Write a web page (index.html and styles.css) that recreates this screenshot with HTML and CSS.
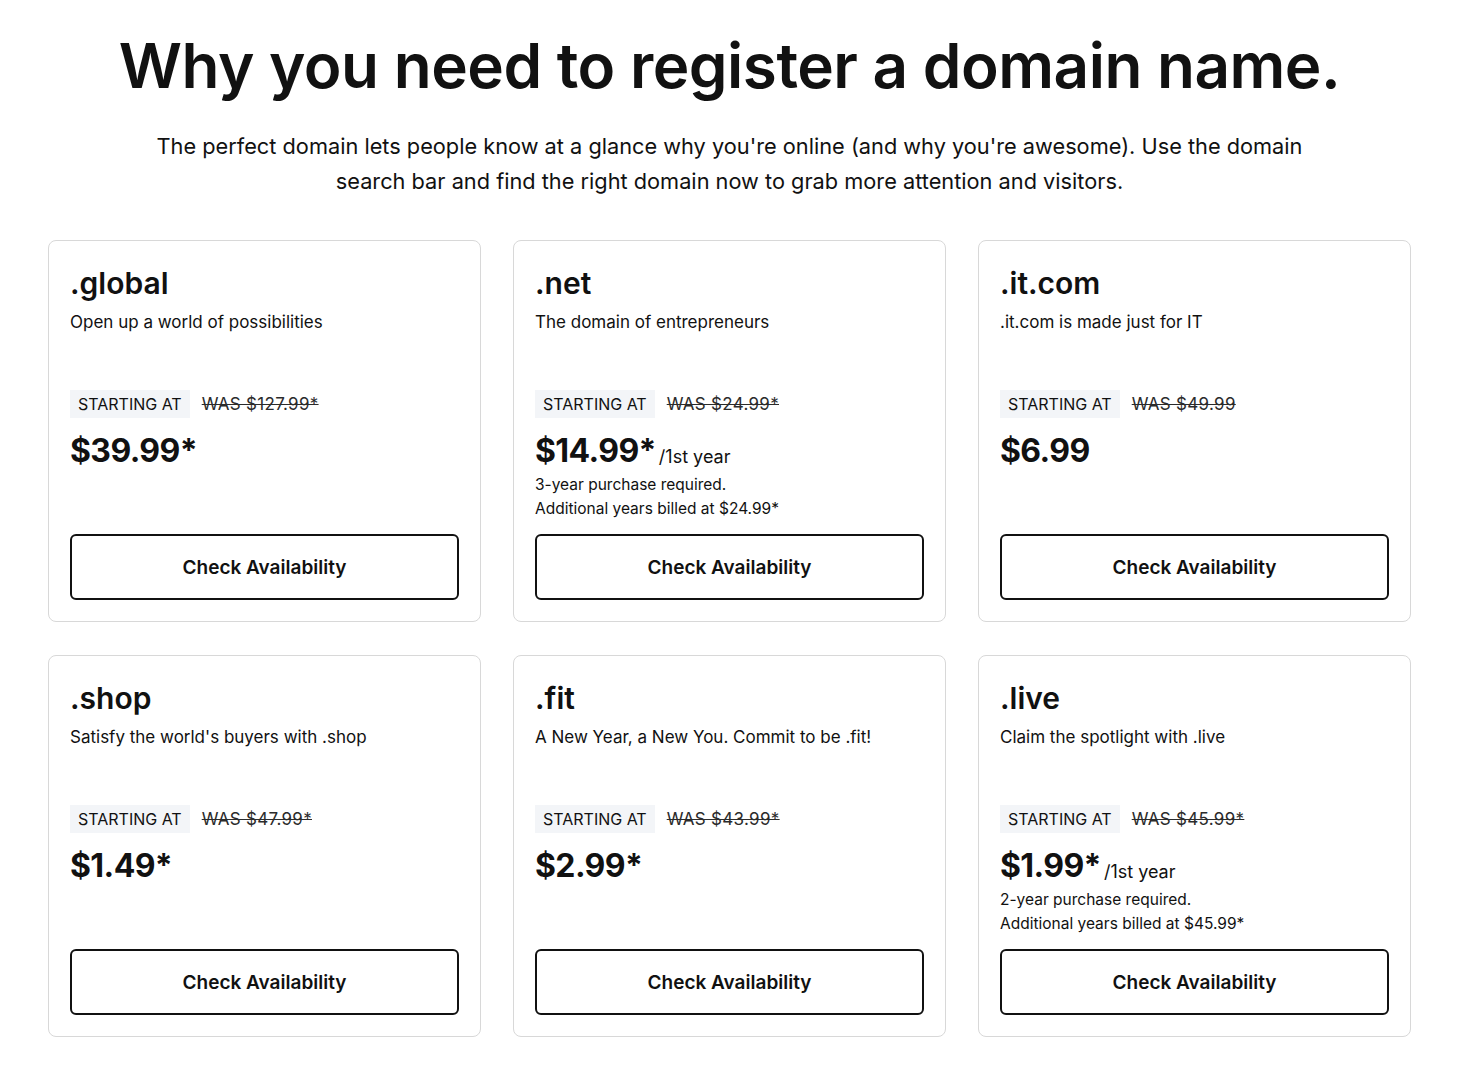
FILE: index.html
```html
<!DOCTYPE html>
<html lang="en">
<head>
<meta charset="utf-8">
<title>Why you need to register a domain name.</title>
<link rel="stylesheet" href="styles.css">
</head>
<body>
<main class="page">
  <header class="intro">
    <h1 class="intro-title">Why you need to register a domain name.</h1>
    <p class="intro-text">The perfect domain lets people know at a glance why you're online (and why you're awesome). Use the domain search bar and find the right domain now to grab more attention and visitors.</p>
  </header>

  <section class="cards">
    <article class="card">
      <h2 class="tld">.global</h2>
      <p class="tagline">Open up a world of possibilities</p>
      <div class="pricing">
        <div class="price-meta"><span class="badge">STARTING AT</span><s class="was">WAS $127.99*</s></div>
        <div class="price-row"><span class="price">$39.99*</span></div>
      </div>
      <button class="cta">Check Availability</button>
    </article>

    <article class="card">
      <h2 class="tld">.net</h2>
      <p class="tagline">The domain of entrepreneurs</p>
      <div class="pricing">
        <div class="price-meta"><span class="badge">STARTING AT</span><s class="was">WAS $24.99*</s></div>
        <div class="price-row"><span class="price">$14.99*</span><span class="term">/1st year</span></div>
        <p class="note">3-year purchase required.</p>
        <p class="note">Additional years billed at $24.99*</p>
      </div>
      <button class="cta">Check Availability</button>
    </article>

    <article class="card">
      <h2 class="tld">.it.com</h2>
      <p class="tagline">.it.com is made just for IT</p>
      <div class="pricing">
        <div class="price-meta"><span class="badge">STARTING AT</span><s class="was">WAS $49.99</s></div>
        <div class="price-row"><span class="price">$6.99</span></div>
      </div>
      <button class="cta">Check Availability</button>
    </article>

    <article class="card">
      <h2 class="tld">.shop</h2>
      <p class="tagline">Satisfy the world's buyers with .shop</p>
      <div class="pricing">
        <div class="price-meta"><span class="badge">STARTING AT</span><s class="was">WAS $47.99*</s></div>
        <div class="price-row"><span class="price">$1.49*</span></div>
      </div>
      <button class="cta">Check Availability</button>
    </article>

    <article class="card">
      <h2 class="tld">.fit</h2>
      <p class="tagline">A New Year, a New You. Commit to be .fit!</p>
      <div class="pricing">
        <div class="price-meta"><span class="badge">STARTING AT</span><s class="was">WAS $43.99*</s></div>
        <div class="price-row"><span class="price">$2.99*</span></div>
      </div>
      <button class="cta">Check Availability</button>
    </article>

    <article class="card">
      <h2 class="tld">.live</h2>
      <p class="tagline">Claim the spotlight with .live</p>
      <div class="pricing">
        <div class="price-meta"><span class="badge">STARTING AT</span><s class="was">WAS $45.99*</s></div>
        <div class="price-row"><span class="price">$1.99*</span><span class="term">/1st year</span></div>
        <p class="note">2-year purchase required.</p>
        <p class="note">Additional years billed at $45.99*</p>
      </div>
      <button class="cta">Check Availability</button>
    </article>
  </section>
</main>
</body>
</html>
```

FILE: styles.css
```css
* { box-sizing: border-box; }

html, body {
  margin: 0;
  padding: 0;
  background: #ffffff;
  color: #111111;
  font-family: Inter, "Liberation Sans", Arial, sans-serif;
}

.page {
  width: 1363px;
  margin: 0 0 0 48px;
  padding: 0 0 40px;
}

.intro {
  text-align: center;
}

.intro-title {
  margin: 0;
  padding-top: 26px;
  font-size: 62px;
  line-height: 80px;
  font-weight: 600;
  letter-spacing: -0.5px;
  color: #111111;
}

.intro-text {
  margin: 23px auto 0;
  max-width: 1180px;
  font-size: 21.75px;
  line-height: 35px;
  color: #111111;
}

.cards {
  margin-top: 41px;
  display: grid;
  grid-template-columns: repeat(3, 1fr);
  column-gap: 32px;
  row-gap: 33px;
}

.card {
  display: flex;
  flex-direction: column;
  border: 1px solid #d8d8d8;
  border-radius: 8px;
  padding: 23px 21px 21px;
  min-height: 382px;
}

.tld {
  margin: 0;
  font-size: 30px;
  line-height: 38px;
  font-weight: 600;
}

.tagline {
  margin: 8px 0 0;
  font-size: 17px;
  line-height: 24px;
}

.pricing {
  margin-top: 56px;
}

.price-meta {
  display: flex;
  align-items: center;
  gap: 12px;
}

.badge {
  display: inline-block;
  background: #f3f5f8;
  padding: 0 8px;
  height: 28px;
  line-height: 28px;
  font-size: 16px;
}

.was {
  font-size: 17px;
  letter-spacing: 0.3px;
  color: #2b2b2b;
}

.price-row {
  display: flex;
  align-items: baseline;
  margin-top: 12px;
  height: 42px;
}

.price {
  font-size: 32px;
  line-height: 42px;
  font-weight: 700;
  letter-spacing: -0.6px;
}

.term {
  margin-left: 3px;
  font-size: 18px;
  transform: translateY(1px);
}

.note {
  margin: 0;
  font-size: 15.5px;
  line-height: 24px;
}

.note:first-of-type {
  margin-top: 1px;
}

.cta {
  margin-top: auto;
  height: 66px;
  width: 100%;
  background: #ffffff;
  border: 2px solid #111111;
  border-radius: 6px;
  font-family: inherit;
  font-size: 19px;
  font-weight: 600;
  color: #111111;
  cursor: pointer;
}
```
